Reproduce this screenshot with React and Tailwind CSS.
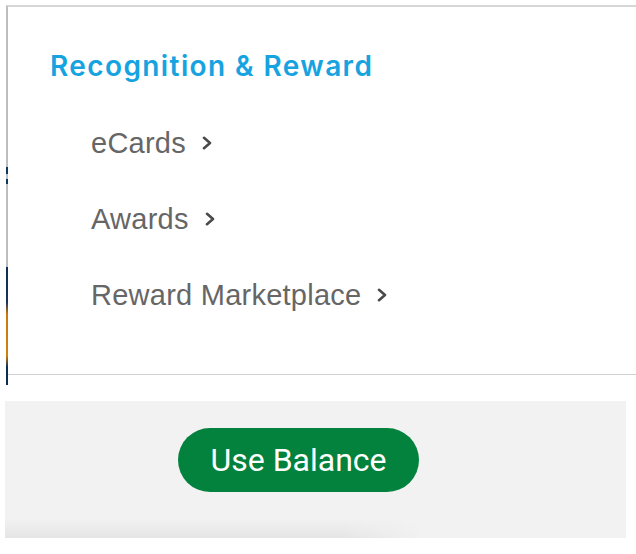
import React from "react";

const Chevron = () => (
  <svg width="12" height="14" viewBox="0 0 12 14" className="ml-[15px] shrink-0">
    <path d="M3 1.8 L9 7 L3 12.2" fill="none" stroke="#4a4a4a" strokeWidth="2.6" strokeLinecap="round" strokeLinejoin="round" />
  </svg>
);

const Item = ({ label }) => (
  <div className="flex items-center h-[32px]">
    <span className="text-[29px] leading-[32px] tracking-[0.25px] text-[#666666] font-['Liberation_Sans',Arial,sans-serif]">{label}</span>
    <Chevron />
  </div>
);

export default function App() {
  return (
    <div className="w-[636px] h-[554px] bg-white overflow-hidden flex flex-col">
      <div className="pt-[5px] pl-[6px] flex">
        <div className="relative flex-1 h-[380px] border-t-2 border-t-[#d6d6d6] border-l-2 border-l-[#bdbdbd] flex flex-col">
          <div className="absolute left-[-2px] top-[160px] w-[2px] h-[7px] bg-[#0d3a5c]" />
          <div className="absolute left-[-2px] top-[172px] w-[2px] h-[5px] bg-[#0d3a5c]" />
          <div className="absolute left-[-2px] top-[260px] w-[2px] h-[118px] bg-[linear-gradient(to_bottom,#0b2d52_0%,#1c3358_30%,#c77a10_40%,#d4800a_75%,#0b2d52_85%,#0b2d52_100%)]" />
          <div className="pl-[42px] pt-[43px] flex flex-col">
            <h2 className="text-[28px] leading-[32px] font-semibold tracking-[1.4px] text-[#17a3e0] font-['Inter',sans-serif]">
              Recognition &amp; Reward
            </h2>
            <div className="pl-[41px] pt-[45px] flex flex-col gap-[44px]">
              <Item label="eCards" />
              <Item label="Awards" />
              <Item label="Reward Marketplace" />
            </div>
          </div>
          <div className="mt-auto h-[11px] border-t border-[#d0d0d0]" />
        </div>
      </div>
      <div className="mt-[16px] ml-[5px] w-[621px] h-[137px] bg-[#f2f2f2] flex flex-col">
        <div className="pl-[173px] pt-[27px]">
          <button className="w-[241px] h-[64px] rounded-full bg-[#03823d] text-white text-[32px] leading-none font-['Roboto',sans-serif] flex items-center justify-center">
            Use Balance
          </button>
        </div>
        <div className="mt-auto w-[420px] h-[20px] bg-[linear-gradient(to_bottom,rgba(0,0,0,0)_0%,rgba(0,0,0,0.05)_100%)] [mask-image:linear-gradient(to_right,black_80%,transparent)]" />
      </div>
    </div>
  );
}
